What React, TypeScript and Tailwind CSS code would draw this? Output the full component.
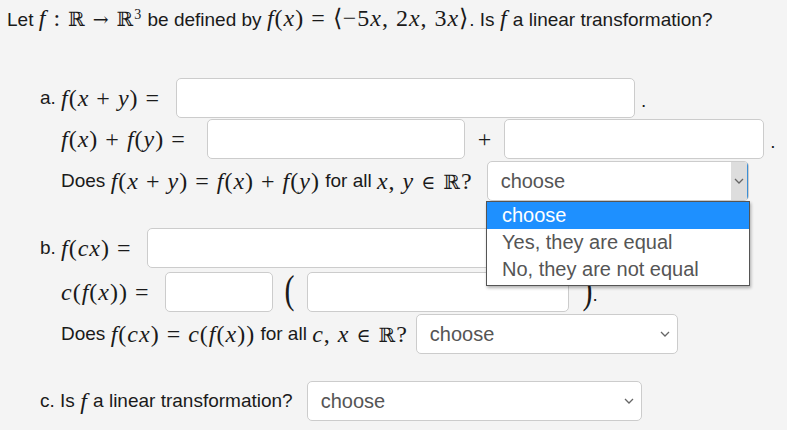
import type { ReactNode } from 'react'

function V({ children }: { children: ReactNode }) {
  return <span className="italic">{children}</span>
}

function M({ children }: { children: ReactNode }) {
  return (
    <span className="font-['Liberation_Serif','Times_New_Roman',serif] text-[24px] tracking-[1px] whitespace-nowrap">
      {children}
    </span>
  )
}

function Op({ children }: { children: ReactNode }) {
  return <span className="mx-[7px]">{children}</span>
}

function Sym({ children }: { children: ReactNode }) {
  return <span className="font-['DejaVu_Serif',serif] text-[19px] mx-[7px]">{children}</span>
}

function R() {
  return <span className="font-['DejaVu_Serif',serif] text-[20px]">ℝ</span>
}

function Box({ w }: { w: string }) {
  return <div className={`${w} h-[40px] bg-white border border-[#cccccc] rounded-[5px] shrink-0`} />
}

function Paren({ children }: { children: ReactNode }) {
  return (
    <span className="font-['Liberation_Serif',serif] text-[30px] leading-none inline-block scale-y-[1.35] -mt-[2px]">
      {children}
    </span>
  )
}

function Chevron() {
  return (
    <svg width="10" height="6" viewBox="0 0 10 6" className="shrink-0">
      <path d="M1 1l4 4 4-4" fill="none" stroke="#666" strokeWidth="1.3" />
    </svg>
  )
}

function Select({ w, open }: { w: string; open?: boolean }) {
  return (
    <div
      className={`${w} h-[40px] bg-white border border-[#cccccc] rounded-[5px] shrink-0 flex items-center overflow-hidden`}
    >
      <span className="pl-[13px] flex-1 text-[20px] text-[#555555]">choose</span>
      {open ? (
        <div className="w-[17px] h-full bg-[#dddddd] border-r border-[#3b8fd6] flex items-center justify-center">
          <Chevron />
        </div>
      ) : (
        <div className="pr-[7px] flex items-center">
          <Chevron />
        </div>
      )}
    </div>
  )
}

export default function App() {
  return (
    <div className="w-[787px] h-[430px] bg-[#f4f4f4] relative overflow-hidden font-['Liberation_Sans',Arial,sans-serif] text-[19px] text-[#1a1a1a]">
      {/* Question */}
      <div className="pl-[7px] pt-[4px] leading-[28px] whitespace-nowrap">
        Let{' '}
        <M>
          <V>f</V>
          <Op>:</Op>
          <R />
          <Sym>→</Sym>
          <R />
          <sup className="text-[14px]">3</sup>
        </M>{' '}
        be defined by{' '}
        <M>
          <V>f</V>(<V>x</V>)<Op>=</Op>⟨−5<V>x</V>, 2<V>x</V>, 3<V>x</V>⟩
        </M>
        . Is{' '}
        <M>
          <V>f</V>
        </M>{' '}
        a linear transformation?
      </div>

      {/* Part a */}
      <div className="mt-[44px] pl-[40px] flex flex-col gap-[1px]">
        <div className="flex items-center h-[40px]">
          <span className="w-[21px]">a.</span>
          <M>
            <V>f</V>(<V>x</V>
            <Op>+</Op>
            <V>y</V>)<Op>=</Op>
          </M>
          <div className="ml-[9px]">
            <Box w="w-[459px]" />
          </div>
          <span className="ml-[6px] mt-[6px]">.</span>
        </div>
        <div className="flex items-center h-[40px] pl-[21px]">
          <M>
            <V>f</V>(<V>x</V>)<Op>+</Op>
            <V>f</V>(<V>y</V>)<Op>=</Op>
          </M>
          <div className="ml-[14px]">
            <Box w="w-[258px]" />
          </div>
          <span className="mx-[13px] font-['Liberation_Serif',serif] text-[24px]">+</span>
          <Box w="w-[260px]" />
          <span className="ml-[6px] mt-[6px]">.</span>
        </div>
        <div className="flex items-center h-[40px] pl-[21px] mt-[1px]">
          <span>Does&nbsp;</span>
          <M>
            <V>f</V>(<V>x</V>
            <Op>+</Op>
            <V>y</V>)<Op>=</Op>
            <V>f</V>(<V>x</V>)<Op>+</Op>
            <V>f</V>(<V>y</V>)
          </M>
          <span>&nbsp;for all&nbsp;</span>
          <M>
            <V>x</V>, <V>y</V>
            <Sym>∈</Sym>
            <R />?
          </M>
          <div className="ml-[14px]">
            <Select w="w-[262px]" open />
          </div>
        </div>
      </div>

      {/* Part b */}
      <div className="mt-[27px] pl-[40px] flex flex-col gap-[4px]">
        <div className="flex items-center h-[40px]">
          <span className="w-[21px]">b.</span>
          <M>
            <V>f</V>(<V>cx</V>)<Op>=</Op>
          </M>
          <div className="ml-[8px]">
            <Box w="w-[470px]" />
          </div>
        </div>
        <div className="flex items-center h-[40px] pl-[21px]">
          <M>
            <V>c</V>(<V>f</V>(<V>x</V>))<Op>=</Op>
          </M>
          <div className="ml-[8px]">
            <Box w="w-[108px]" />
          </div>
          <span className="mx-[12px]">
            <Paren>(</Paren>
          </span>
          <Box w="w-[262px]" />
          <span className="ml-[14px]">
            <Paren>)</Paren>
          </span>
          <span className="mt-[6px]">.</span>
        </div>
        <div className="flex items-center h-[40px] pl-[21px] -mt-[2px]">
          <span>Does&nbsp;</span>
          <M>
            <V>f</V>(<V>cx</V>)<Op>=</Op>
            <V>c</V>(<V>f</V>(<V>x</V>))
          </M>
          <span>&nbsp;for all&nbsp;</span>
          <M>
            <V>c</V>, <V>x</V>
            <Sym>∈</Sym>
            <R />?
          </M>
          <div className="ml-[8px]">
            <Select w="w-[262px]" />
          </div>
        </div>
      </div>

      {/* Part c */}
      <div className="mt-[27px] pl-[40px] flex items-center h-[40px]">
        <span>c. Is&nbsp;</span>
        <M>
          <V>f</V>
        </M>
        <span>&nbsp;a linear transformation?</span>
        <div className="ml-[14px]">
          <Select w="w-[335px]" />
        </div>
      </div>

      {/* Open dropdown list */}
      <div className="absolute left-[486px] top-[201px] w-[264px] bg-white border border-[#555555] shadow-[1px_2px_3px_rgba(0,0,0,0.3)] text-[20px] text-[#555555] leading-[27px] pb-[2px]">
        <div className="bg-[#1e90ff] text-white pl-[15px]">choose</div>
        <div className="pl-[15px]">Yes, they are equal</div>
        <div className="pl-[15px]">No, they are not equal</div>
      </div>
    </div>
  )
}
